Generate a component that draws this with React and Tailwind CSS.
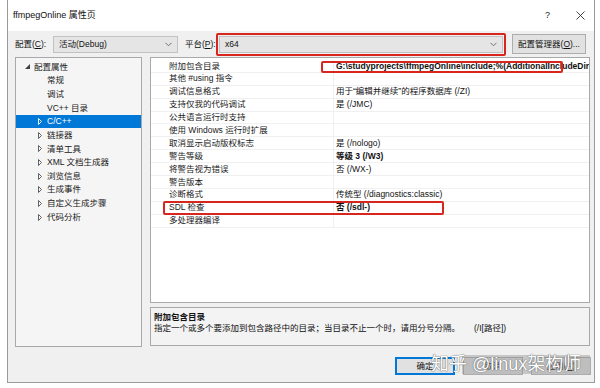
import React from 'react';

const FONT = { fontFamily: '"Liberation Sans", "Noto Sans CJK SC", sans-serif' };

// tree items on the left pane
const treeItems = [
  { label: '配置属性', level: 0, expanded: true },
  { label: '常规', level: 1 },
  { label: '调试', level: 1 },
  { label: 'VC++ 目录', level: 1 },
  { label: 'C/C++', level: 1, collapsed: true, selected: true },
  { label: '链接器', level: 1, collapsed: true },
  { label: '清单工具', level: 1, collapsed: true },
  { label: 'XML 文档生成器', level: 1, collapsed: true },
  { label: '浏览信息', level: 1, collapsed: true },
  { label: '生成事件', level: 1, collapsed: true },
  { label: '自定义生成步骤', level: 1, collapsed: true },
  { label: '代码分析', level: 1, collapsed: true },
];

// property grid rows
const rows = [
  { name: '附加包含目录', value: 'G:\\studyprojects\\ffmpegOnline\\include;%(AdditionalIncludeDirectories)', bold: true, mark: 'value' },
  { name: '其他 #using 指令', value: '' },
  { name: '调试信息格式', value: '用于“编辑并继续”的程序数据库 (/ZI)' },
  { name: '支持仅我的代码调试', value: '是 (/JMC)' },
  { name: '公共语言运行时支持', value: '' },
  { name: '使用 Windows 运行时扩展', value: '' },
  { name: '取消显示启动版权标志', value: '是 (/nologo)' },
  { name: '警告等级', value: '等级 3 (/W3)', bold: true },
  { name: '将警告视为错误', value: '否 (/WX-)' },
  { name: '警告版本', value: '' },
  { name: '诊断格式', value: '传统型 (/diagnostics:classic)' },
  { name: 'SDL 检查', value: '否 (/sdl-)', bold: true, mark: 'row' },
  { name: '多处理器编译', value: '' },
];

const Chevron = () => (
  <svg width="7" height="5" viewBox="0 0 7 5" className="shrink-0">
    <polyline points="0.5,0.8 3.5,3.8 6.5,0.8" fill="none" stroke="#707070" strokeWidth="1" />
  </svg>
);

const ComboBox = ({ text, className }) => (
  <div className={`h-[17px] bg-[#e5e5e5] border border-[#c2c2c2] flex items-center justify-between pl-[5px] pr-[5px] ${className}`}>
    <span className="text-[8.5px] text-[#111]">{text}</span>
    <Chevron />
  </div>
);

const TreeRow = ({ item }) => (
  <div className={`h-[13.67px] flex items-center ${item.selected ? 'bg-[#0078d7] text-white' : 'text-[#1a1a1a]'}`}>
    {item.level === 0 ? (
      <div className="w-[18px] flex justify-end pr-[4px]">
        <svg width="5" height="5" viewBox="0 0 5 5">
          <polygon points="5,0 5,5 0,5" fill="#404040" />
        </svg>
      </div>
    ) : (
      <div className="w-[31px] flex justify-end pr-[5px]">
        {item.collapsed && (
          <svg width="4" height="7" viewBox="0 0 4 7">
            <polygon points="0.5,0.5 3.5,3.5 0.5,6.5" fill="none" stroke={item.selected ? '#ffffff' : '#505050'} strokeWidth="0.9" />
          </svg>
        )}
      </div>
    )}
    <span className="text-[8.5px] leading-none">{item.label}</span>
  </div>
);

const GridRow = ({ row }) => (
  <div className="relative h-[12.9px] grid grid-cols-[183px_1fr] border-b border-[#f0f0f0]">
    <div className="flex items-center pl-[18px] border-r border-[#f0f0f0] text-[8.5px] text-[#1a1a1a] whitespace-nowrap overflow-hidden">
      {row.name}
    </div>
    <div className={`flex items-center pl-[2px] text-[8.5px] text-[#111] whitespace-nowrap overflow-hidden ${row.bold ? 'font-bold' : ''}`}>
      {row.value}
    </div>
    {row.mark === 'value' && (
      <div className="absolute left-[170px] top-[1px] w-[242px] h-[12px] border-2 border-[#d8261e] rounded-[2px]" />
    )}
    {row.mark === 'row' && (
      <div className="absolute left-[12px] top-[-1px] w-[281px] h-[14px] border-2 border-[#d8261e] rounded-[2px]" />
    )}
  </div>
);

const Button = ({ children, primary }) => (
  <div className={`w-[60px] h-[18px] flex items-center justify-center text-[8.5px] text-[#111] bg-[#e1e1e1] border ${primary ? 'border-[#0078d7] border-2' : 'border-[#adadad]'}`}>
    {children}
  </div>
);

export default function App() {
  return (
    <div className="w-[600px] h-[388px] bg-white overflow-hidden relative" style={FONT}>
      <div className="ml-[7px] w-[588px] h-[383px] border-x border-b border-[#9a9a9a] bg-[#f0f0f0] flex flex-col">
        {/* title bar */}
        <div className="h-[31px] bg-white flex items-center justify-between pl-[5px]">
          <span className="text-[9px] text-[#111]">ffmpegOnline 属性页</span>
          <div className="flex items-center gap-[26px] pr-[9px] text-[#222]">
            <span className="text-[9px]">?</span>
            <svg width="9" height="9" viewBox="0 0 9 9">
              <path d="M0.5 0.5 L8.5 8.5 M8.5 0.5 L0.5 8.5" stroke="#333" strokeWidth="0.9" />
            </svg>
          </div>
        </div>

        {/* configuration row */}
        <div className="h-[26px] flex items-center pl-[7px]">
          <span className="w-[38px] text-[8.5px] text-[#111]">配置(<u>C</u>):</span>
          <ComboBox text="活动(Debug)" className="w-[125px]" />
          <span className="ml-[7px] w-[31px] text-[8.5px] text-[#111]">平台(<u>P</u>):</span>
          <div className="w-[290px] h-[23px] border-2 border-[#d8261e] rounded-[2px] p-[1px] flex items-center">
            <ComboBox text="x64" className="w-full" />
          </div>
          <div className="ml-[6px] w-[74px] h-[20px] bg-[#e1e1e1] border border-[#adadad] flex items-center justify-center text-[8.5px] text-[#111]">
            配置管理器(<u>O</u>)...
          </div>
        </div>

        {/* main area */}
        <div className="flex pl-[7px] gap-[8px]">
          <div className="w-[127px] h-[290px] bg-[#f5f5f5] border border-[#a9a9a9] pt-[2px]">
            {treeItems.map((item) => (
              <TreeRow key={item.label} item={item} />
            ))}
          </div>
          <div className="w-[440px] flex flex-col">
            <div className="h-[246px] bg-white border border-[#a9a9a9] pt-[2px] overflow-hidden">
              {rows.map((row) => (
                <GridRow key={row.name} row={row} />
              ))}
            </div>
            <div className="mt-[4px] h-[39px] bg-[#f3f3f3] border border-[#a9a9a9] pl-[3px] pt-[4px] text-[8.5px] text-[#111]">
              <div className="font-bold leading-[11px]">附加包含目录</div>
              <div className="flex leading-[11px] whitespace-nowrap">
                <span>指定一个或多个要添加到包含路径中的目录；当目录不止一个时，请用分号分隔。</span>
                <span className="ml-[14px]">(/I[路径])</span>
              </div>
            </div>
          </div>
        </div>

        {/* dialog buttons */}
        <div className="mt-[10px] flex justify-end gap-[8px] pr-[3px]">
          <Button primary>确定</Button>
          <Button>取消</Button>
          <Button>应用(<u>A</u>)</Button>
        </div>
      </div>

      {/* watermark over the buttons */}
      <div className="absolute left-[462px] top-[355px] w-[128px] h-[19px] bg-[#8a8a8a]/40" />
      <div
        className="absolute left-[431px] top-[353px] text-[18px] leading-[22px] text-white whitespace-nowrap"
        style={{ ...FONT, textShadow: '0 0 1px #666, 0 0 1px #666' }}
      >
        知乎 @linux架构师
      </div>
    </div>
  );
}
